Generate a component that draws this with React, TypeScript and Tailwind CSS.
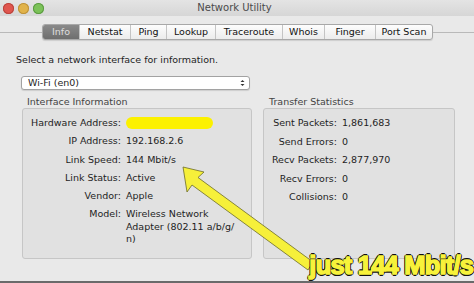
import React from 'react';

const tabs = ['Info', 'Netstat', 'Ping', 'Lookup', 'Traceroute', 'Whois', 'Finger', 'Port Scan'];
const tabWidths = [36, 51, 36, 49, 67, 42, 51, 57];

const iface = [
    ['Hardware Address:', ''],
    ['IP Address:', '192.168.2.6'],
    ['Link Speed:', '144 Mbit/s'],
    ['Link Status:', 'Active'],
    ['Vendor:', 'Apple'],
];

const stats = [
    ['Sent Packets:', '1,861,683'],
    ['Send Errors:', '0'],
    ['Recv Packets:', '2,877,970'],
    ['Recv Errors:', '0'],
    ['Collisions:', '0'],
];

const App = () => {
    return (
        <div className="relative h-[283px] w-[474px] overflow-hidden border-b-2 border-[#6a6a6a] bg-[#e9e9e9] text-[9.5px] leading-[12px] text-[#1e1e1e]" style={{ fontFamily: '"DejaVu Sans", "Liberation Sans", sans-serif' }}>
            {/* title bar */}
            <div className="relative flex h-[16px] items-center bg-gradient-to-b from-[#e4e4e4] to-[#d6d6d6] px-[3px]">
                <div className="flex gap-[4px]">
                    <span className="h-[11px] w-[11px] rounded-full bg-[#e0564f] shadow-[inset_0_0_0_1px_#b9433c]"></span>
                    <span className="h-[11px] w-[11px] rounded-full bg-[#e1b34a] shadow-[inset_0_0_0_1px_#bd923a]"></span>
                    <span className="h-[11px] w-[11px] rounded-full bg-[#7cc259] shadow-[inset_0_0_0_1px_#5a9a41]"></span>
                </div>
                <div className="flex-1 pr-[46px] text-center text-[10px] text-[#4a4a4a]">Network Utility</div>
            </div>

            {/* tabs */}
            <div className="mt-[8px] flex items-center">
                <div className="h-px w-[42px] bg-[#b9b9b9]"></div>
                <div className="flex h-[16px] overflow-hidden rounded-[3px] border border-[#a8a8a8] bg-gradient-to-b from-[#fdfdfd] to-[#ececec] shadow-[0_1px_1px_rgba(0,0,0,0.12)]">
                    {tabs.map((t, i) => (
                        <div
                            key={t}
                            style={{ width: tabWidths[i] }}
                            className={
                                i === 0
                                    ? 'flex items-center justify-center bg-gradient-to-b from-[#8a8a8a] to-[#6e6e6e] text-[9.5px] text-[#dedede]'
                                    : 'flex items-center justify-center border-l border-[#c4c4c4] text-[9.5px] text-[#111]'
                            }
                        >
                            {t}
                        </div>
                    ))}
                </div>
                <div className="h-px flex-1 bg-[#b9b9b9]"></div>
            </div>

            {/* content */}
            <div className="px-[16px] pt-[14px]">
                <div>Select a network interface for information.</div>
                <div className="ml-[5px] mt-[10px] flex h-[14px] w-[229px] items-center justify-between rounded-[3px] border border-[#a2a2a2] bg-white pl-[6px] pr-[4px] shadow-[0_1px_1px_rgba(0,0,0,0.12)]">
                    <span>Wi-Fi (en0)</span>
                    <svg width="5" height="8" viewBox="0 0 5 8">
                        <path d="M0.5 3 L2.5 1 L4.5 3 Z M0.5 5 L2.5 7 L4.5 5 Z" fill="#333" />
                    </svg>
                </div>

                <div className="mt-[6px] flex gap-[11px] pl-[6px]">
                    <div className="w-[230px]">
                        <div className="h-[12px] pl-[5px] text-[#444]">Interface Information</div>
                        <div className="h-[151px] rounded-[3px] border border-[#c6c6c6] bg-[#e1e1e1] pt-[5px]">
                            {iface.map(([k, v], i) => (
                                <div key={k} className="flex h-[18.3px] items-center">
                                    <div className="w-[98px] text-right">{k}</div>
                                    <div className="pl-[5px]">
                                        {i === 0 ? <div className="h-[12px] w-[87px] rounded-full bg-[#fcf100]"></div> : v}
                                    </div>
                                </div>
                            ))}
                            <div className="mt-[3px] flex">
                                <div className="w-[98px] text-right">Model:</div>
                                <div className="w-[122px] pl-[5px] leading-[12.5px]">Wireless Network Adapter (802.11 a/b/g/ n)</div>
                            </div>
                        </div>
                    </div>
                    <div className="w-[192px]">
                        <div className="h-[12px] pl-[6px] text-[#444]">Transfer Statistics</div>
                        <div className="h-[151px] rounded-[3px] border border-[#c6c6c6] bg-[#e1e1e1] pt-[5px]">
                            {stats.map(([k, v]) => (
                                <div key={k} className="flex h-[18.5px] items-center">
                                    <div className="w-[73px] text-right">{k}</div>
                                    <div className="pl-[5px]">{v}</div>
                                </div>
                            ))}
                        </div>
                    </div>
                </div>
            </div>

            {/* annotation arrow */}
            <svg className="absolute left-0 top-0" width="474" height="283" viewBox="0 0 474 283">
                <path
                    d="M183 167 L204 172 L198 177.5 L313 262 L308 270 L192 185 L187 192 Z"
                    fill="#f6f03a"
                    stroke="#6b6b2a"
                    strokeWidth="0.8"
                    strokeLinejoin="round"
                />
            </svg>

            {/* annotation text */}
            <div
                className="absolute bottom-[3px] right-[1px] origin-right scale-x-[0.98] text-[26px] font-bold leading-[26px] tracking-[-0.8px] text-[#f7f23a] [-webkit-text-stroke:1.6px_#f7f23a] [text-shadow:1.6px_0_0_#111,-1.6px_0_0_#111,0_1.6px_0_#111,0_-1.6px_0_#111,1.2px_1.2px_0_#111,-1.2px_-1.2px_0_#111,1.2px_-1.2px_0_#111,-1.2px_1.2px_0_#111,0_0_2px_#000]"
                style={{ fontFamily: '"Liberation Sans", Arial, sans-serif' }}
            >
                just 144 Mbit/s
            </div>
        </div>
    );
};

export default App;
